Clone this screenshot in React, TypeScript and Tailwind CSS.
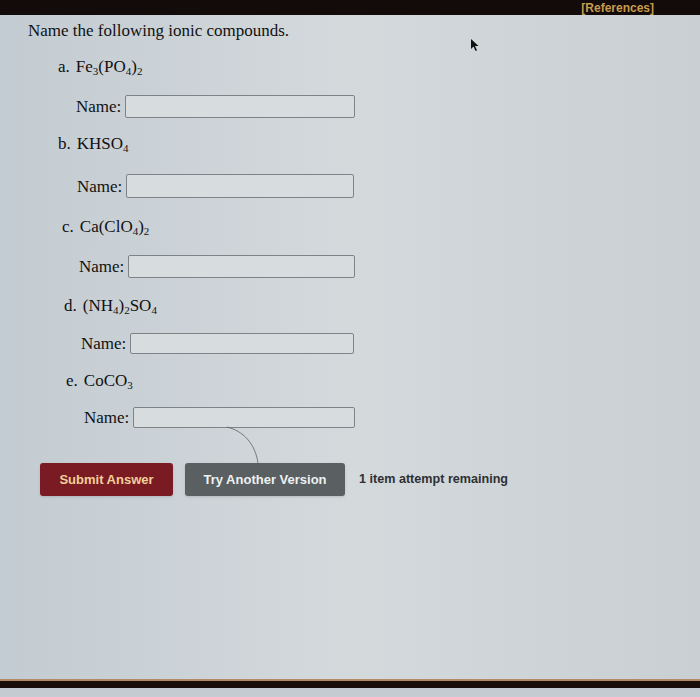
/*
this file:
    - ionic compounds naming question, photographed off a screen
*/

const serif = { fontFamily: '"Liberation Serif", "Times New Roman", serif' };

interface Question {
    letter: string;
    formula: React.ReactNode;
    indent: string; // formula row left offset
    nameIndent: string; // Name: row left offset
    boxWidth: string;
    gapTop: string;
    nameGapTop: string;
    boxHeight: string;
}

function Sub({ children }: { children: React.ReactNode }) {
    return <span className="relative top-[3px] text-[11px]">{children}</span>;
}

const questions: Question[] = [
    {
        letter: "a.",
        formula: (
            <>
                Fe<Sub>3</Sub>(PO<Sub>4</Sub>)<Sub>2</Sub>
            </>
        ),
        indent: "ml-[58px]",
        nameIndent: "ml-[76px]",
        boxWidth: "w-[230px]",
        gapTop: "mt-[16px]",
        nameGapTop: "mt-[19px]",
        boxHeight: "h-[23px]",
    },
    {
        letter: "b.",
        formula: (
            <>
                KHSO<Sub>4</Sub>
            </>
        ),
        indent: "ml-[58px]",
        nameIndent: "ml-[77px]",
        boxWidth: "w-[228px]",
        gapTop: "mt-[15px]",
        nameGapTop: "mt-[21px]",
        boxHeight: "h-[24px]",
    },
    {
        letter: "c.",
        formula: (
            <>
                Ca(ClO<Sub>4</Sub>)<Sub>2</Sub>
            </>
        ),
        indent: "ml-[62px]",
        nameIndent: "ml-[79px]",
        boxWidth: "w-[227px]",
        gapTop: "mt-[18px]",
        nameGapTop: "mt-[19px]",
        boxHeight: "h-[23px]",
    },
    {
        letter: "d.",
        formula: (
            <>
                (NH<Sub>4</Sub>)<Sub>2</Sub>SO<Sub>4</Sub>
            </>
        ),
        indent: "ml-[64px]",
        nameIndent: "ml-[81px]",
        boxWidth: "w-[224px]",
        gapTop: "mt-[17px]",
        nameGapTop: "mt-[18px]",
        boxHeight: "h-[21px]",
    },
    {
        letter: "e.",
        formula: (
            <>
                CoCO<Sub>3</Sub>
            </>
        ),
        indent: "ml-[66px]",
        nameIndent: "ml-[84px]",
        boxWidth: "w-[222px]",
        gapTop: "mt-[16px]",
        nameGapTop: "mt-[17px]",
        boxHeight: "h-[21px]",
    },
];

export default function App() {
    return (
        <div className="relative flex h-[697px] w-[700px] flex-col overflow-hidden bg-[#cbd2d6]">
            {/* top bar */}
            <div className="flex h-[15px] items-center justify-end bg-[#120b09] pr-[46px]">
                <span
                    className="text-[12px] font-bold leading-none text-[#c89a4c]"
                    style={{ fontFamily: '"Liberation Sans", Arial, sans-serif' }}
                >
                    [References]
                </span>
            </div>

            <main className="flex-1 bg-linear-to-r from-[#c3ccd2] via-[#d4d9dc] to-[#c9cfd3] text-[#111]" style={serif}>
                <div className="ml-[28px] mt-[5px] flex h-[20px] items-center text-[17px] leading-none">
                    Name the following ionic compounds.
                </div>

                {questions.map((q) => (
                    <div key={q.letter}>
                        <div className={`${q.indent} ${q.gapTop} flex h-[20px] items-center text-[17px] leading-none`}>
                            <span className="mr-[6px]">{q.letter}</span>
                            <span>{q.formula}</span>
                        </div>
                        <div
                            className={`${q.nameIndent} ${q.nameGapTop} ${q.boxHeight} flex items-center text-[17px] leading-none`}
                        >
                            <span className="mr-[4px]">Name:</span>
                            <div
                                className={`${q.boxWidth} ${q.boxHeight} rounded-[2px] border border-[#7d8488] bg-[#d7dcdf]`}
                            />
                        </div>
                    </div>
                ))}

                {/* actions */}
                <div
                    className="ml-[40px] mt-[35px] flex items-center font-bold"
                    style={{ fontFamily: '"Liberation Sans", Arial, sans-serif' }}
                >
                    <button className="h-[33px] w-[133px] rounded-[3px] bg-[#7a1b24] text-[13px] text-[#f1cf9a] shadow-sm">
                        Submit Answer
                    </button>
                    <button className="ml-[12px] h-[33px] w-[160px] rounded-[3px] bg-[#5a5f62] text-[13px] text-[#eef1f2] shadow-sm">
                        Try Another Version
                    </button>
                    <span className="ml-[14px] text-[12.6px] text-[#2e3033]">1 item attempt remaining</span>
                </div>
            </main>

            {/* bottom bezel edge */}
            <div className="h-[2px] bg-[#b28a66]" />
            <div className="h-[7px] bg-[#1a0e0b]" />
            <div className="h-[9px] bg-[#c4ccd1]" />

            {/* mouse pointer */}
            <svg className="absolute left-[470px] top-[38px]" width="10" height="14" viewBox="0 0 10 14">
                <path d="M1 1 L1 11 L3.5 8.5 L5.5 13 L7 12.3 L5 8 L8.5 8 Z" fill="#111" />
            </svg>

            {/* stray reflection line */}
            <svg className="absolute left-[225px] top-[425px]" width="40" height="40" viewBox="0 0 40 40">
                <path d="M2 2 C 18 6, 30 18, 33 38" fill="none" stroke="#5b6266" strokeWidth="0.8" />
            </svg>
        </div>
    );
}
